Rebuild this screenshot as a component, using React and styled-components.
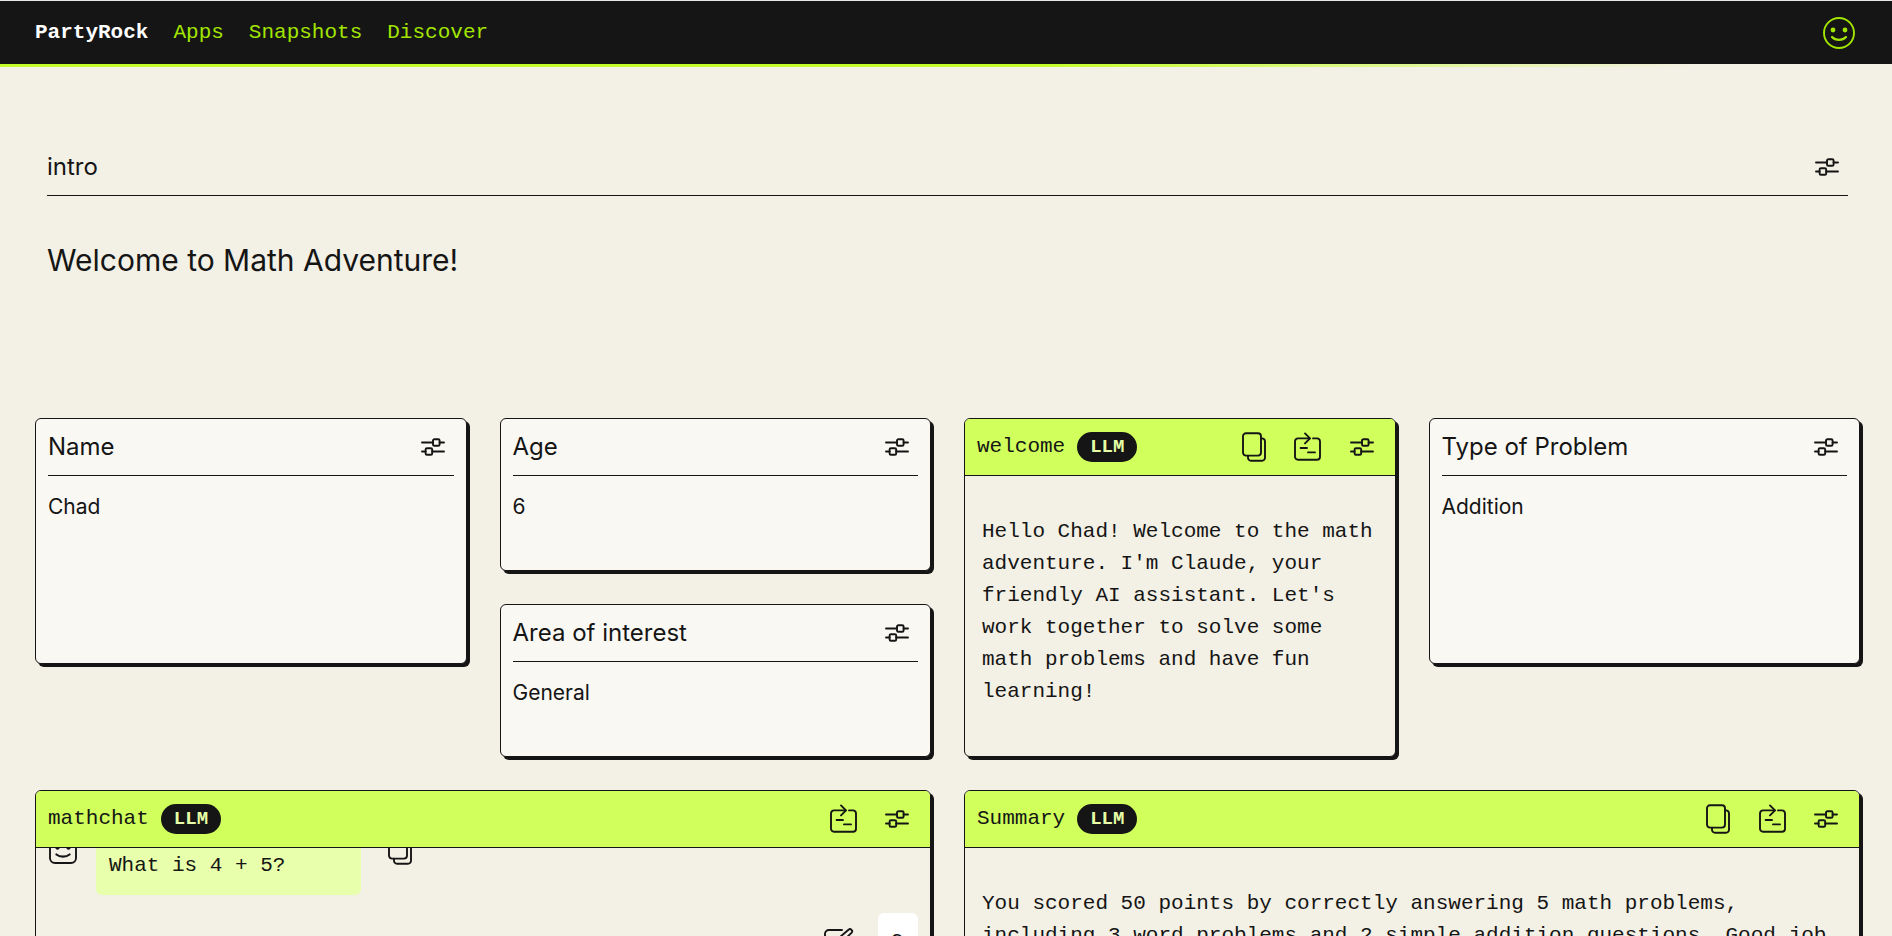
import React, { useId } from 'react'
import styled, { createGlobalStyle } from 'styled-components';

const ink = '#151515';
const paper = '#f3f0e5';
const lime = '#d1ff5c';
const sans = `Inter, 'Liberation Sans', sans-serif`;
const mono = `'Liberation Mono', monospace`;

const GlobalStyle = createGlobalStyle`
  * {
    box-sizing: border-box;
  }
  body {
    margin: 0;
    background: ${paper};
    color: ${ink};
    font-family: ${sans};
  }
`;

const Page = styled.div`
  height: 100vh;
  overflow-y: auto;
  scrollbar-width: none;
`;

const TopBar = styled.header`
  display: flex;
  align-items: center;
  justify-content: space-between;
  height: 64px;
  padding: 0 32px 0 35px;
  background: ${ink};
  border-top: 1px solid #e4e7e7;
`;

const Stripe = styled.div`
  height: 3px;
  background: linear-gradient(90deg, #c4ff2b 55%, ${paper} 90%);
`;

const Nav = styled.nav`
  display: flex;
  align-items: center;
  gap: 25px;
  font-family: ${mono};
  font-size: 21px;
  line-height: 32px;
`;

const NavLink = styled.a`
  color: #a2e600;
  text-decoration: none;
`;

const Brand = styled(NavLink)`
  color: #fff;
  font-weight: 700;
`;

const IconButton = styled.button`
  display: flex;
  align-items: center;
  justify-content: center;
  flex: none;
  width: 42px;
  height: 42px;
  padding: 0;
  border: none;
  background: none;
  color: ${({ $color }) => $color || ink};
  cursor: pointer;
`;

const Board = styled.main`
  display: grid;
  grid-template-columns: repeat(4, minmax(0, 1fr));
  grid-auto-rows: 60px;
  gap: 33px;
  padding: 72px 32px 48px 35px;
`;

const Widget = styled.section`
  display: flex;
  flex-direction: column;
  grid-column: ${({ $col }) => $col};
  grid-row: ${({ $row }) => $row};
  min-width: 0;
  overflow: hidden;
`;

const Card = styled(Widget)`
  background: ${({ $plain }) => ($plain ? '#faf8f3' : paper)};
  border: 1px solid ${ink};
  border-radius: 6px;
  box-shadow: 3px 3px 0 ${ink};
`;

const WidgetHead = styled.div`
  display: flex;
  align-items: center;
  gap: 12px;
  flex: none;
  height: 57px;
  margin: 0 12px;
  border-bottom: 1px solid ${ink};
`;

const LlmHead = styled(WidgetHead)`
  margin: 0;
  padding: 0 12px;
  background: ${lime};
`;

const Title = styled.h2`
  margin: 0;
  font-family: ${({ $mono }) => ($mono ? mono : sans)};
  font-size: ${({ $mono }) => ($mono ? '21px' : '24px')};
  font-weight: 400;
  line-height: 32px;
`;

const Badge = styled.span`
  padding: 0 13px;
  border-radius: 15px;
  background: ${ink};
  color: #e6ffa6;
  font-family: ${mono};
  font-size: 19px;
  font-weight: 700;
  line-height: 30px;
`;

const Tools = styled.div`
  display: flex;
  gap: 12px;
  margin-left: auto;
`;

const Heading = styled.h1`
  margin: 44px 12px 0;
  font-size: 30px;
  font-weight: 400;
  line-height: 40px;
`;

const Field = styled.textarea`
  flex: 1;
  min-height: 0;
  margin: 0 12px;
  padding: 15px 0 0;
  border: none;
  outline: none;
  resize: none;
  background: transparent;
  color: ${ink};
  font-family: ${sans};
  font-size: 21px;
  line-height: 32px;
`;

const Output = styled.p`
  margin: 0;
  padding: 40px 17px;
  font-family: ${mono};
  font-size: 21px;
  line-height: 32px;
`;

const ChatLog = styled.div`
  flex: 1;
  min-height: 0;
  overflow: hidden;
`;

/* the log is scrolled past the top of the oldest message */
const Messages = styled.div`
  display: flex;
  flex-direction: column;
  gap: 18px;
  margin-top: -43px;
  padding: 0 12px;
`;

const Message = styled.div`
  display: flex;
  align-items: center;
  justify-content: ${({ $own }) => ($own ? 'flex-end' : 'flex-start')};
  gap: 18px;
`;

const Avatar = styled.span`
  display: flex;
  justify-content: center;
  width: 30px;
`;

const Bubble = styled.div`
  display: flex;
  align-items: flex-end;
  min-width: ${({ $own }) => ($own ? '40px' : '265px')};
  min-height: ${({ $own }) => ($own ? '58px' : '90px')};
  padding: 13px;
  border-radius: 6px;
  background: ${({ $own }) => ($own ? '#fff' : '#e8ffab')};
  font-family: ${mono};
  font-size: 21px;
  line-height: 32px;
`;

const Svg = ({ w, h, children }) => (
  <svg width={w} height={h} viewBox={`0 0 ${w} ${h}`} fill="none" stroke="currentColor" strokeWidth="1.9" strokeLinecap="round" strokeLinejoin="round" aria-hidden="true">
    {children}
  </svg>
)

const SlidersIcon = () => (
  <Svg w={24} h={18}>
    <path d="M1 4.5h11M18.6 4.5H23M1 13.5h3.600M11.200 13.500H23" />
    <rect x="12" y="1.200" width="6.600" height="6.600" rx="1.400" />
    <rect x="4.600" y="10.200" width="6.600" height="6.600" rx="1.400" />
  </Svg>
)

const CopyIcon = () => (
  <Svg w={24} h={30}>
    <rect x="1" y="1.200" width="18" height="22.400" rx="3" />
    <path d="M19 6.400h1a3 3 0 0 1 3 3v16.400a3 3 0 0 1-3 3H9a3 3 0 0 1-3-3v-2.200" />
  </Svg>
)

const RemixIcon = () => (
  <Svg w={27} h={30}>
    <path d="M19 6.400h4a3 3 0 0 1 3 3v15.400a3 3 0 0 1-3 3H4a3 3 0 0 1-3-3V9.400a3 3 0 0 1 3-3h11.600" />
    <path d="M11 1.400l5 5-5 5M6.600 16h6.400M14 20.400h7" />
  </Svg>
)

const SmileIcon = () => (
  <Svg w={32} h={32}>
    <circle cx="16" cy="16" r="15" />
    <path d="M9 20c3.500 3.800 10.500 3.800 14 0" strokeWidth="2.200" />
    <circle cx="10" cy="13" r="2.400" fill="currentColor" stroke="none" />
    <circle cx="22" cy="13" r="2.400" fill="currentColor" stroke="none" />
  </Svg>
)

const BotIcon = () => (
  <Svg w={28} h={28}>
    <rect x="1" y="1" width="26" height="26" rx="5" />
    <path d="M7.400 18.500c3.500 2.900 9.700 2.900 13.200 0" strokeWidth="2.200" />
    <circle cx="8.500" cy="11.500" r="2.200" fill="currentColor" stroke="none" />
    <circle cx="19.500" cy="11.500" r="2.200" fill="currentColor" stroke="none" />
  </Svg>
)

const EditIcon = () => (
  <Svg w={30} h={28}>
    <path d="M18 2H5a4 4 0 0 0-4 4v17a4 4 0 0 0 4 4h17a4 4 0 0 0 4-4v-9" />
    <path d="M11 17l1.500-5L24.500 1.800a2 2 0 0 1 3 3L16 16z" />
  </Svg>
)

const Settings = () => (
  <IconButton type="button" aria-label="Settings"><SlidersIcon /></IconButton>
)

const InputCard = ({ title, value, col, row }) => {
  const id = useId()
  return (
    <Card $plain $col={col} $row={row}>
      <WidgetHead>
        <Title as="label" htmlFor={id}>{title}</Title>
        <Tools><Settings /></Tools>
      </WidgetHead>
      <Field id={id} defaultValue={value} spellCheck={false} />
    </Card>
  )
}

const LlmCard = ({ title, col, row, copy, children }) => (
  <Card $col={col} $row={row}>
    <LlmHead>
      <Title $mono>{title}</Title>
      <Badge>LLM</Badge>
      <Tools>
        {copy && <IconButton type="button" aria-label="Copy"><CopyIcon /></IconButton>}
        <IconButton type="button" aria-label="Regenerate"><RemixIcon /></IconButton>
        <Settings />
      </Tools>
    </LlmHead>
    {children}
  </Card>
)

const App = () => {
  return (
    <Page>
      <GlobalStyle />
      <TopBar>
        <Nav>
          <Brand href="#home">PartyRock</Brand>
          <NavLink href="#apps">Apps</NavLink>
          <NavLink href="#snapshots">Snapshots</NavLink>
          <NavLink href="#discover">Discover</NavLink>
        </Nav>
        <IconButton type="button" $color="#a2e600" aria-label="Account"><SmileIcon /></IconButton>
      </TopBar>
      <Stripe />
      <Board>
        <Widget $col="1 / -1" $row="1 / span 3">
          <WidgetHead>
            <Title>intro</Title>
            <Tools><Settings /></Tools>
          </WidgetHead>
          <Heading>Welcome to Math Adventure!</Heading>
        </Widget>

        <InputCard title="Name" value="Chad" col="1" row="4 / span 3" />
        <InputCard title="Age" value="6" col="2" row="4 / span 2" />
        <InputCard title="Area of interest" value="General" col="2" row="6 / span 2" />
        <LlmCard title="welcome" copy col="3" row="4 / span 4">
          <Output>Hello Chad! Welcome to the math adventure. I'm Claude, your friendly AI assistant. Let's work together to solve some math problems and have fun learning!</Output>
        </LlmCard>
        <InputCard title="Type of Problem" value="Addition" col="4" row="4 / span 3" />

        <LlmCard title="mathchat" col="1 / span 2" row="8 / span 5">
          <ChatLog>
            <Messages>
              <Message>
                <Avatar><BotIcon /></Avatar>
                <Bubble>What is 4 + 5?</Bubble>
                <IconButton type="button" aria-label="Copy message"><CopyIcon /></IconButton>
              </Message>
              <Message $own>
                <IconButton type="button" aria-label="Edit message"><EditIcon /></IconButton>
                <Bubble $own>9</Bubble>
              </Message>
            </Messages>
          </ChatLog>
        </LlmCard>
        <LlmCard title="Summary" copy col="3 / span 2" row="8 / span 5">
          <Output>You scored 50 points by correctly answering 5 math problems, including 3 word problems and 2 simple addition questions. Good job</Output>
        </LlmCard>
      </Board>
    </Page>
  )
}

export default App
